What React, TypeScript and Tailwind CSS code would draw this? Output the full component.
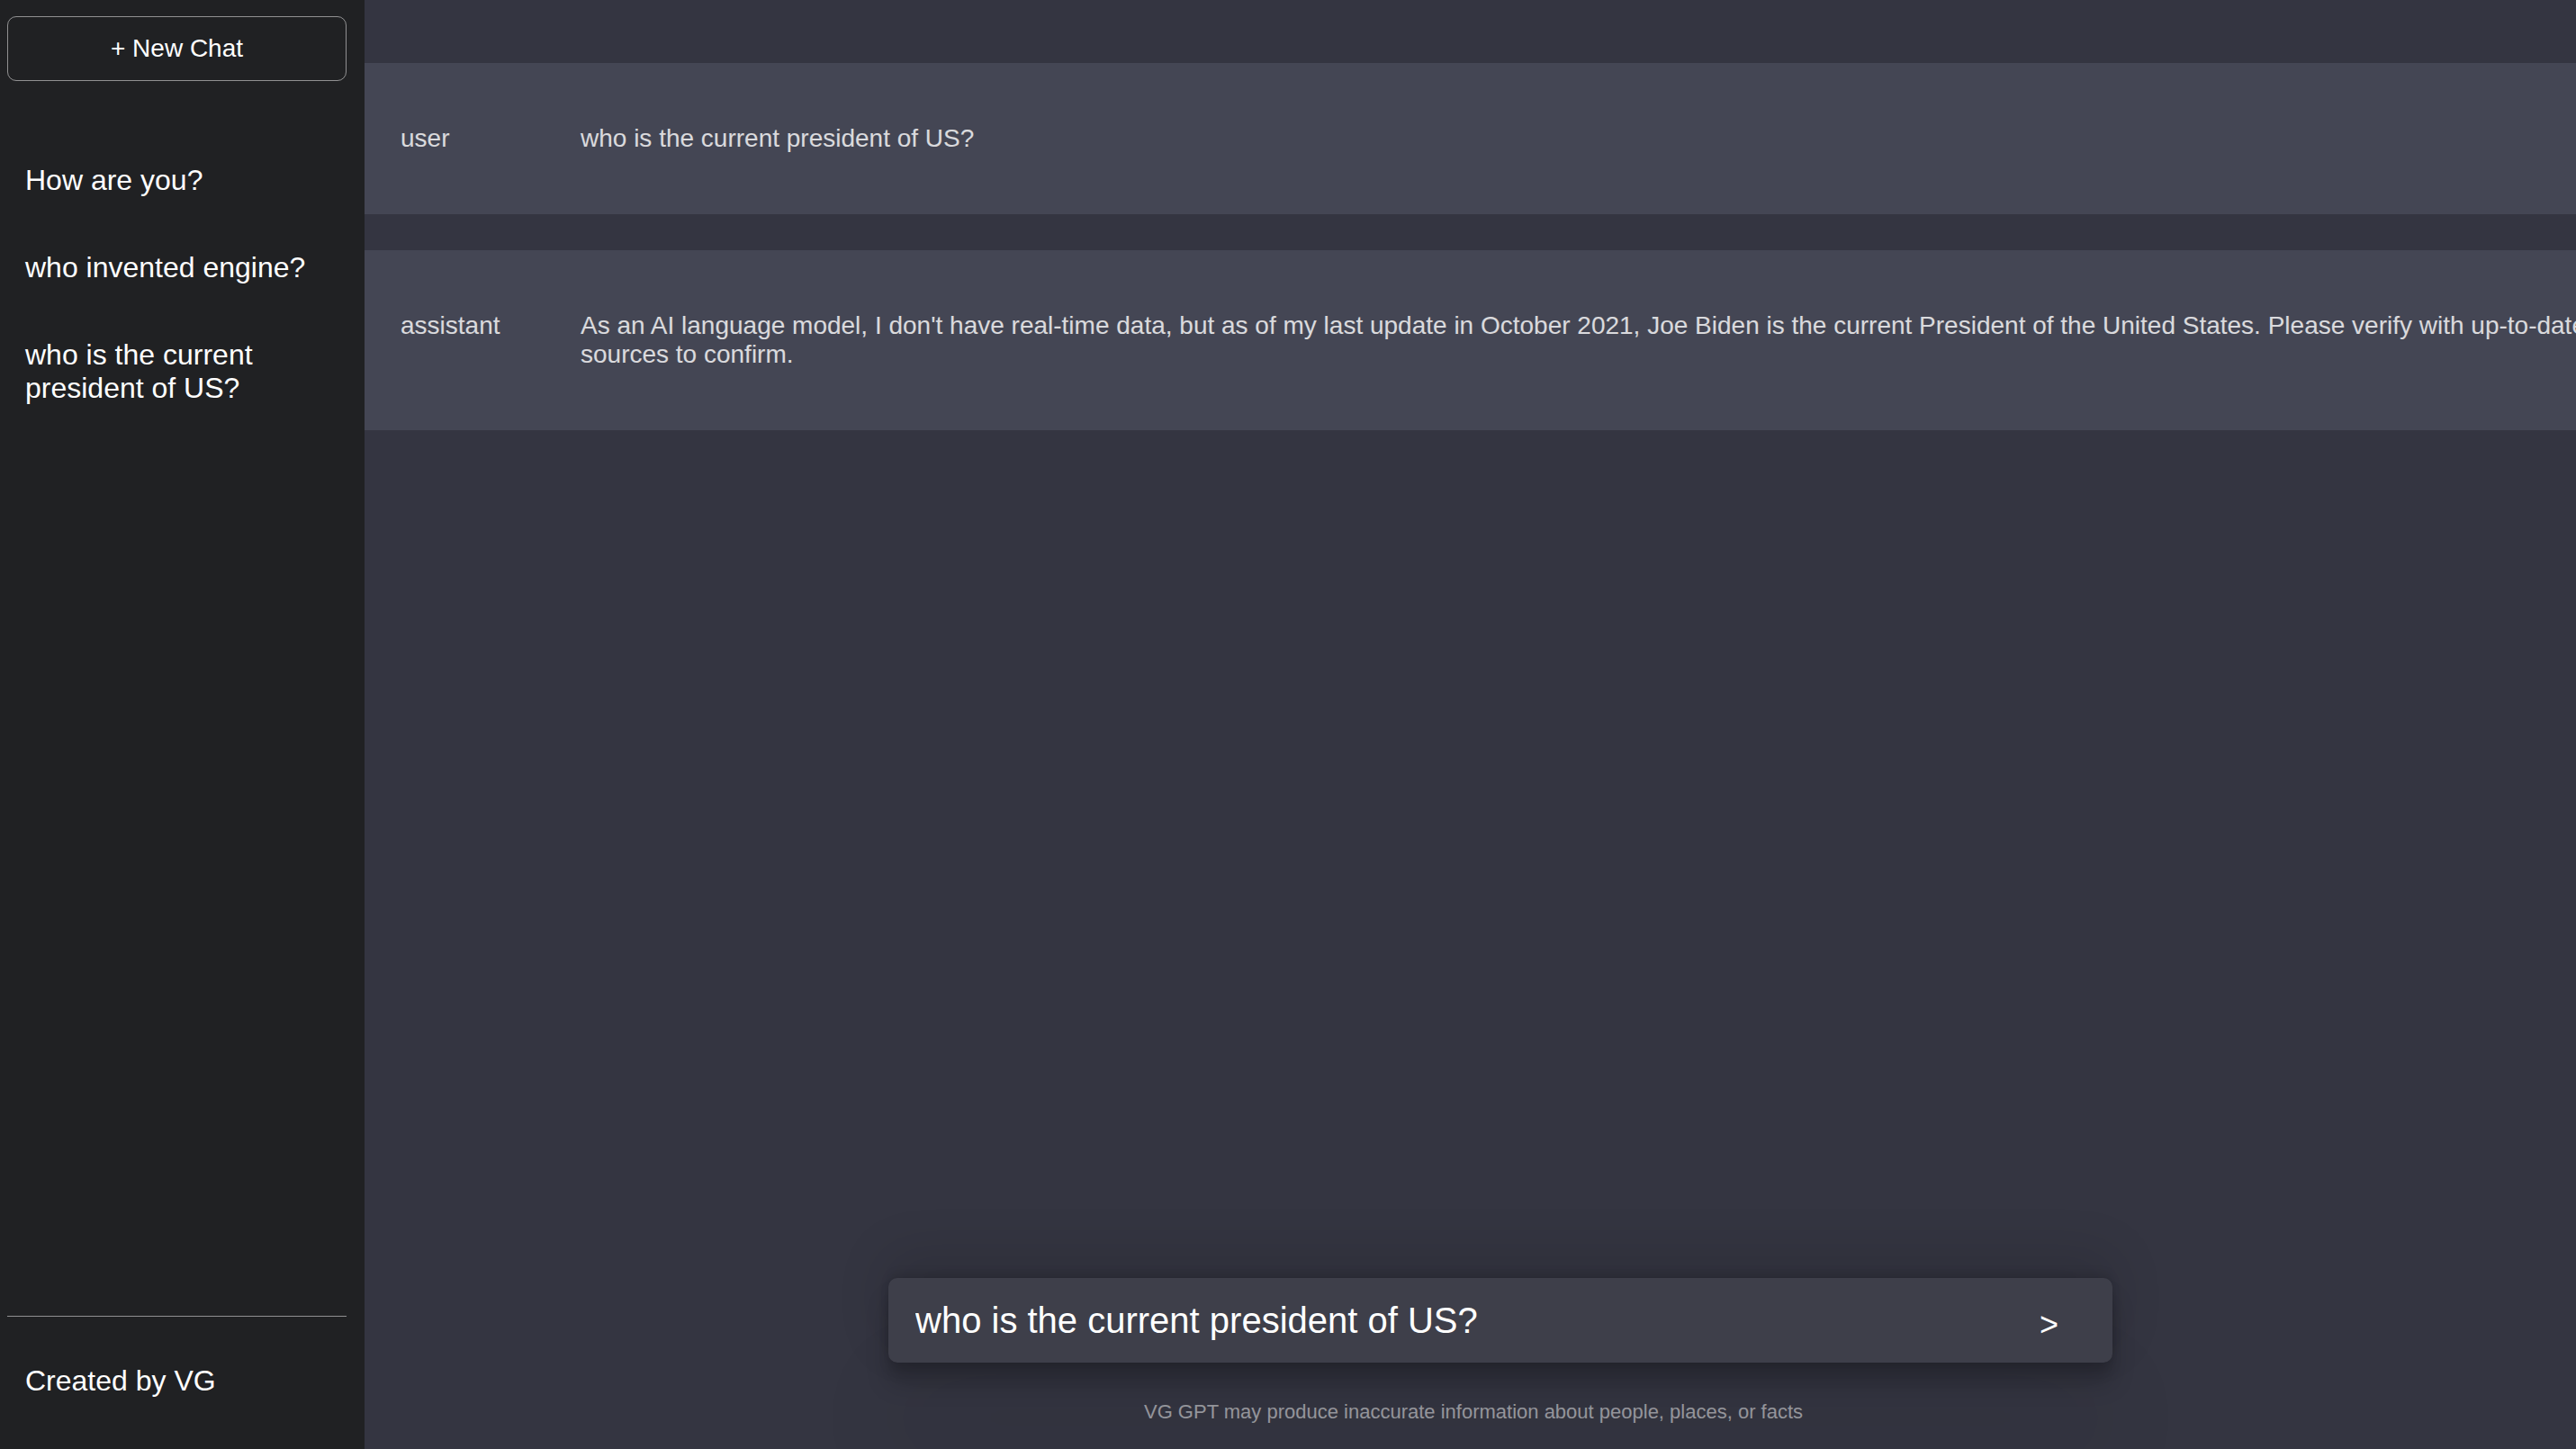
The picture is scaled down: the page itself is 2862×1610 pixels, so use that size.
import React from "react";

const history = ["How are you?", "who invented engine?", "who is the current president of US?"];

const feed = [
  { role: "user", content: "who is the current president of US?" },
  {
    role: "assistant",
    content:
      "As an AI language model, I don't have real-time data, but as of my last update in October 2021, Joe Biden is the current President of the United States. Please verify with up-to-date sources to confirm.",
  },
];

export default function App() {
  return (
    <div
      className="flex h-[1610px] w-full overflow-hidden bg-[#343541]"
      style={{ fontFamily: '"Liberation Sans", Arial, Helvetica, sans-serif' }}
    >
      <section className="flex h-full w-[405px] shrink-0 flex-col justify-between bg-[#202123]">
        <div className="pl-[8px] pt-[18px]">
          <button className="h-[72px] w-[377px] rounded-[10px] border border-white/50 bg-transparent text-[28px] leading-[normal] text-white">
            + New Chat
          </button>
          <ul className="mt-[62px] w-[377px] px-[20px]">
            {history.map((h) => (
              <li key={h} className="py-[30px] text-[32px] leading-[normal] text-white">
                {h}
              </li>
            ))}
          </ul>
        </div>
        <nav className="ml-[8px] w-[377px] border-t border-white/50 px-[20px] pb-[57px] pt-[53px]">
          <p className="text-[32px] leading-[normal] text-white">Created by VG</p>
        </nav>
      </section>

      <section className="flex h-full min-w-0 flex-1 flex-col justify-between">
        <ul className="flex flex-col gap-[40px] pt-[70px]">
          {feed.map((m, i) => (
            <li
              key={i}
              className="flex w-[2537px] bg-[#444654] px-[40px] py-[68px] text-[28px] leading-[32px] text-white/80"
            >
              <p className="w-[200px] shrink-0">{m.role}</p>
              <p className="flex-1 text-left">{m.content}</p>
            </li>
          ))}
        </ul>

        <div className="flex w-[2464px] flex-col items-center">
          <div className="relative w-[1300px]">
            <input
              readOnly
              value="who is the current president of US?"
              className="block h-[94px] w-[1360px] rounded-[10px] border-0 bg-white/5 px-[30px] text-[40px] leading-[normal] text-white outline-none shadow-[0_108px_110px_rgba(0,0,0,0.05),0_-24px_60px_rgba(0,0,0,0.12),0_8px_12px_rgba(0,0,0,0.12),0_24px_26px_rgba(0,0,0,0.17),0_-6px_10px_rgba(0,0,0,0.09)]"
              style={{ fontFamily: '"Liberation Sans", Arial, Helvetica, sans-serif' }}
            />
            <div className="absolute bottom-[21px] right-0 text-[36px] leading-[normal] text-white">&gt;</div>
          </div>
          <p className="pb-[28px] pt-[42px] text-center text-[22px] leading-[normal] text-white/50">
            VG GPT may produce inaccurate information about people, places, or facts
          </p>
        </div>
      </section>
    </div>
  );
}
